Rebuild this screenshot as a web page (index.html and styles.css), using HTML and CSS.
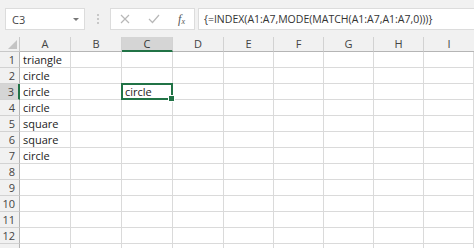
FILE: index.html
```html
<!DOCTYPE html>
<html>
<head>
<meta charset="utf-8">
<link rel="stylesheet" href="styles.css">
</head>
<body>
<div class="app">
  <div class="toolbar">
    <div class="namebox"><span class="ref">C3</span><span class="caret"></span></div>
    <div class="dots"><i></i><i></i><i></i></div>
    <div class="fbtns">
      <svg class="ic" width="10" height="10" viewBox="0 0 10 10"><path d="M1 1 L9 9 M9 1 L1 9" stroke="#b8b8b8" stroke-width="1.2" fill="none"/></svg>
      <svg class="ic" width="12" height="10" viewBox="0 0 12 10"><path d="M1 5 L4.5 8.5 L11 1" stroke="#b8b8b8" stroke-width="1.2" fill="none"/></svg>
      <span class="fx"><i>f</i><sub>x</sub></span>
    </div>
    <div class="formula">{=INDEX(A1:A7,MODE(MATCH(A1:A7,A1:A7,0)))}</div>
  </div>
  <div class="grid">
    <div class="corner"><span class="tri"></span></div>
    <div class="ch">A</div><div class="ch">B</div><div class="ch sel">C</div><div class="ch">D</div><div class="ch">E</div><div class="ch">F</div><div class="ch">G</div><div class="ch">H</div><div class="ch last">I</div>

    <div class="rh">1</div><div class="c">triangle</div><div class="c"></div><div class="c"></div><div class="c"></div><div class="c"></div><div class="c"></div><div class="c"></div><div class="c"></div><div class="c"></div>
    <div class="rh">2</div><div class="c">circle</div><div class="c"></div><div class="c"></div><div class="c"></div><div class="c"></div><div class="c"></div><div class="c"></div><div class="c"></div><div class="c"></div>
    <div class="rh sel">3</div><div class="c">circle</div><div class="c"></div><div class="c active">circle<span class="handle"></span></div><div class="c"></div><div class="c"></div><div class="c"></div><div class="c"></div><div class="c"></div><div class="c"></div>
    <div class="rh">4</div><div class="c">circle</div><div class="c"></div><div class="c"></div><div class="c"></div><div class="c"></div><div class="c"></div><div class="c"></div><div class="c"></div><div class="c"></div>
    <div class="rh">5</div><div class="c">square</div><div class="c"></div><div class="c"></div><div class="c"></div><div class="c"></div><div class="c"></div><div class="c"></div><div class="c"></div><div class="c"></div>
    <div class="rh">6</div><div class="c">square</div><div class="c"></div><div class="c"></div><div class="c"></div><div class="c"></div><div class="c"></div><div class="c"></div><div class="c"></div><div class="c"></div>
    <div class="rh">7</div><div class="c">circle</div><div class="c"></div><div class="c"></div><div class="c"></div><div class="c"></div><div class="c"></div><div class="c"></div><div class="c"></div><div class="c"></div>
    <div class="rh">8</div><div class="c"></div><div class="c"></div><div class="c"></div><div class="c"></div><div class="c"></div><div class="c"></div><div class="c"></div><div class="c"></div><div class="c"></div>
    <div class="rh">9</div><div class="c"></div><div class="c"></div><div class="c"></div><div class="c"></div><div class="c"></div><div class="c"></div><div class="c"></div><div class="c"></div><div class="c"></div>
    <div class="rh">10</div><div class="c"></div><div class="c"></div><div class="c"></div><div class="c"></div><div class="c"></div><div class="c"></div><div class="c"></div><div class="c"></div><div class="c"></div>
    <div class="rh">11</div><div class="c"></div><div class="c"></div><div class="c"></div><div class="c"></div><div class="c"></div><div class="c"></div><div class="c"></div><div class="c"></div><div class="c"></div>
    <div class="rh">12</div><div class="c"></div><div class="c"></div><div class="c"></div><div class="c"></div><div class="c"></div><div class="c"></div><div class="c"></div><div class="c"></div><div class="c"></div>
    <div class="rh">13</div><div class="c"></div><div class="c"></div><div class="c"></div><div class="c"></div><div class="c"></div><div class="c"></div><div class="c"></div><div class="c"></div><div class="c"></div>
  </div>
</div>
</body>
</html>
```
FILE: styles.css
```css
html, body {
  margin: 0;
  padding: 0;
  background: #ffffff;
}
.app {
  width: 474px;
  height: 248px;
  overflow: hidden;
  font-family: "Open Sans", "Liberation Sans", sans-serif;
  color: #222;
}
.toolbar {
  height: 37px;
  background: #f1f1f1;
  display: flex;
  align-items: flex-start;
  padding-top: 8px;
  box-sizing: border-box;
}
.namebox {
  margin-left: 5px;
  width: 80px;
  height: 22px;
  box-sizing: border-box;
  background: #fff;
  border: 1px solid #dcdcdc;
  display: flex;
  align-items: center;
  justify-content: space-between;
  padding: 0 5px 0 6px;
  font-size: 11px;
  color: #444;
}
.caret {
  width: 0;
  height: 0;
  border-left: 3px solid transparent;
  border-right: 3px solid transparent;
  border-top: 3px solid #777;
}
.dots {
  width: 25px;
  height: 22px;
  display: flex;
  flex-direction: column;
  align-items: center;
  justify-content: center;
  gap: 2px;
}
.dots i {
  width: 2px;
  height: 2px;
  background: #c8c8c8;
}
.fbtns {
  width: 85px;
  height: 22px;
  box-sizing: border-box;
  background: #fff;
  border: 1px solid #dcdcdc;
  display: flex;
  align-items: center;
  justify-content: space-between;
  padding: 0 9px 0 9px;
}
.fx {
  font-family: "Liberation Serif", serif;
  font-size: 12px;
  color: #555;
  line-height: 1;
}
.fx sub {
  font-size: 8px;
  font-style: italic;
  vertical-align: -1px;
}
.formula {
  margin-left: 3px;
  flex: 1;
  height: 22px;
  box-sizing: border-box;
  background: #fff;
  border: 1px solid #dcdcdc;
  border-right: none;
  font-size: 10.5px;
  line-height: 20px;
  padding-left: 5px;
  color: #333;
  white-space: nowrap;
}
.grid {
  display: grid;
  grid-template-columns: 20px 51px 51px 51px 51px 50px 50px 50px 50px 50px;
  grid-template-rows: 15px repeat(13, 16px);
}
.corner {
  background: #f1f1f1;
  border-right: 1px solid #c8c8c8;
  border-bottom: 1px solid #c8c8c8;
  box-sizing: border-box;
  position: relative;
}
.tri {
  position: absolute;
  right: 2px;
  bottom: 2px;
  width: 0;
  height: 0;
  border-left: 9px solid transparent;
  border-bottom: 9px solid #c4c4c4;
}
.ch {
  background: #f1f1f1;
  border-right: 1px solid #d2d2d2;
  border-bottom: 1px solid #b5b5b5;
  box-sizing: border-box;
  font-size: 11px;
  line-height: 14px;
  text-align: center;
  color: #444;
}
.ch.sel {
  background: #d5d5d5;
  border-bottom: 2px solid #217346;
  color: #333;
}
.ch.last {
  border-right: none;
}
.rh {
  background: #f1f1f1;
  border-right: 1px solid #b5b5b5;
  border-bottom: 1px solid #d2d2d2;
  box-sizing: border-box;
  font-size: 11px;
  line-height: 15px;
  text-align: right;
  padding-right: 4px;
  color: #444;
}
.rh.sel {
  background: #d5d5d5;
  border-right: 2px solid #217346;
}
.c {
  border-right: 1px solid #dadada;
  border-bottom: 1px solid #dadada;
  box-sizing: border-box;
  font-size: 11px;
  line-height: 15px;
  padding-left: 3px;
  color: #222;
  white-space: nowrap;
}
.c.active {
  position: relative;
  border: 2px solid #217346;
  margin: -1px 0 0 -1px;
  width: 52px;
  height: 17px;
  line-height: 13px;
  padding-left: 2px;
}
.handle {
  position: absolute;
  right: -4px;
  bottom: -4px;
  width: 5px;
  height: 5px;
  background: #217346;
  border: 1px solid #fff;
}
```
